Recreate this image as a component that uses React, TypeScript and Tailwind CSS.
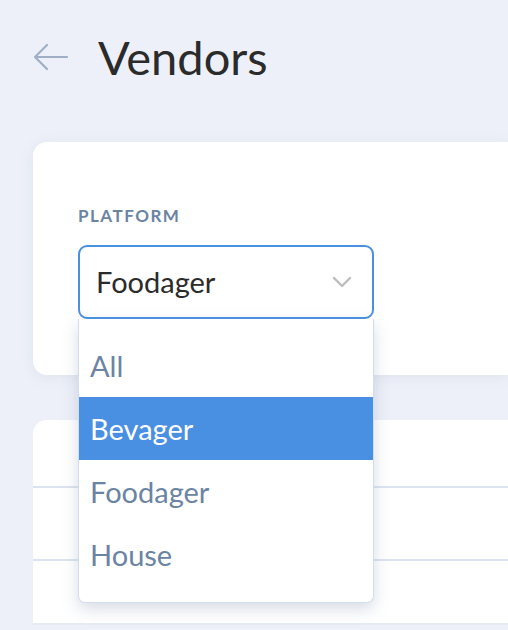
import React from "react";

export default function App() {
  const items = ["All", "Bevager", "Foodager", "House"];
  return (
    <div className="w-[508px] h-[630px] overflow-hidden bg-[#edf0f8] relative" style={{ fontFamily: "Lato, 'Noto Sans', sans-serif" }}>
      <div className="flex items-center h-[116px] pl-[33px] pb-[2px]">
        <svg width="36" height="28" viewBox="0 0 36 28" fill="none" stroke="#9fb0c6" strokeWidth="2.2" strokeLinecap="round" strokeLinejoin="round">
          <path d="M34 14H2M14 2L2 14l12 12" />
        </svg>
        <h1 className="ml-[29px] text-[47px] leading-none text-[#2b2b2b]">Vendors</h1>
      </div>
      <div className="ml-[33px] mt-[26px] h-[233px] rounded-l-[14px] bg-white shadow-[0_2px_12px_rgba(180,190,215,0.25)] pl-[45px] pt-[65px]">
        <div className="text-[17px] font-bold tracking-[1.5px] text-[#6b84a3] leading-none">PLATFORM</div>
        <div className="relative mt-[21px] w-[296px]">
          <div className="h-[74px] border-2 border-[#4a90e2] rounded-[9px] flex items-center justify-between pl-[16px] pr-[20px]">
            <span className="text-[29px] text-[#2b2b2b]">Foodager</span>
            <svg width="20" height="12" viewBox="0 0 20 12" fill="none" stroke="#bdbdbd" strokeWidth="2.4" strokeLinecap="round" strokeLinejoin="round">
              <path d="M2 2l8 8 8-8" />
            </svg>
          </div>
          <div className="absolute left-0 top-[74px] w-[296px] z-10 bg-white border border-[#d3deec] border-t-0 rounded-b-[7px] shadow-[0_6px_16px_rgba(120,140,170,0.3)] pt-[15px] pb-[16px]">
            {items.map((it) => (
              <div
                key={it}
                className={
                  "h-[63px] flex items-center pl-[11px] text-[29px] " +
                  (it === "Bevager" ? "bg-[#4a90e2] text-white" : "text-[#6b84a3]")
                }
              >
                {it}
              </div>
            ))}
          </div>
        </div>
      </div>
      <div className="ml-[33px] mt-[45px] h-[205px] rounded-tl-[14px] bg-white border-b-2 border-[#e6ebf3]">
        <div className="h-[66px]" />
        <div className="h-[73px] border-t-2 border-[#dde4ef]" />
        <div className="border-t-2 border-[#dde4ef]" />
      </div>
    </div>
  );
}
